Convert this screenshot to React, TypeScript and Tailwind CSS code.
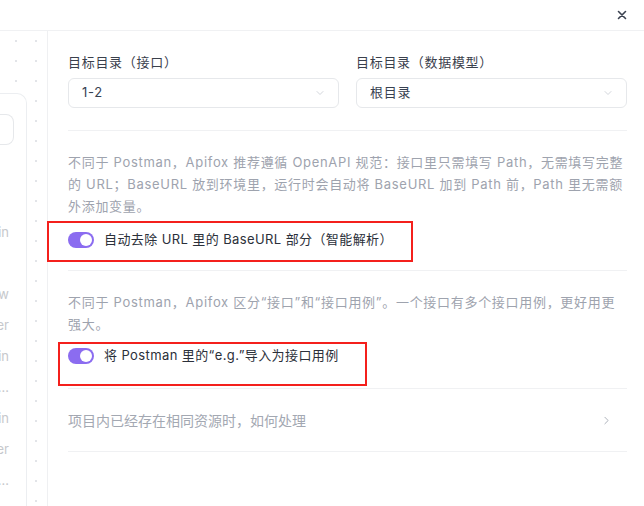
import { ChevronDown, ChevronRight } from 'lucide-react'

const leftRows = ['', '', 'Admin', '', 'Follow', 'User', 'Login', 'Pet …', 'Plugin', 'Order', 'Store …']

function Toggle() {
  return (
    <span className="flex h-[16px] w-[26px] shrink-0 items-center justify-end rounded-full bg-[#8b6cf0] px-[2px]">
      <span className="h-[12px] w-[12px] rounded-full bg-white" />
    </span>
  )
}

function Select({ value }: { value: string }) {
  return (
    <div className="flex h-[30px] items-center justify-between rounded-[6px] border border-[#e6e8eb] pl-[13px] pr-[12px]">
      <span className="text-[13px] text-[#374151]">{value}</span>
      <ChevronDown size={12} strokeWidth={1.5} className="text-[#c3c7cf]" />
    </div>
  )
}

export default function App() {
  return (
    <div className="relative h-[506px] w-[644px] overflow-hidden bg-white font-['Inter','Noto_Sans_CJK_SC',sans-serif]">
      {/* header */}
      <div className="flex h-[31px] items-center justify-end border-b border-[#f0f1f3] pr-[17px]">
        <svg width="10" height="10" viewBox="0 0 10 10" className="text-[#3b4250]">
          <path d="M1.5 1.5 L8.5 8.5 M8.5 1.5 L1.5 8.5" stroke="currentColor" strokeWidth="1.6" strokeLinecap="round" />
        </svg>
      </div>

      <div className="flex h-[475px]">
        {/* left strip */}
        <div className="w-[48px] shrink-0 border-r border-[#eff0f2] bg-[radial-gradient(circle,#e2e4e8_1px,transparent_1.2px)] bg-[length:20px_20px] bg-[position:6px_0px]">
          <div className="mt-[62px] h-full w-[27px] rounded-tr-[10px] border-r border-t border-[#eceef1] bg-white">
            <div className="mt-[20px] h-[31px] w-[14px] rounded-r-[8px] border border-l-0 border-[#e6e8eb]" />
            <div className="mt-[10px]">
              {leftRows.map((t, i) => (
                <div key={i} className="flex h-[31px] items-center justify-end overflow-hidden whitespace-nowrap pr-[17px] text-[13px] text-[#c6c8cc]">
                  {t}
                </div>
              ))}
            </div>
          </div>
        </div>

        {/* main */}
        <div className="flex-1 pl-[20px] pr-[17px] pt-[21px] tracking-[0.7px]">
          <div className="grid grid-cols-2 gap-[17px]">
            <div>
              <div className="mb-[6px] text-[13px] leading-[20px] text-[#3a404c]">目标目录（接口）</div>
              <Select value="1-2" />
            </div>
            <div>
              <div className="mb-[6px] text-[13px] leading-[20px] text-[#3a404c]">目标目录（数据模型）</div>
              <Select value="根目录" />
            </div>
          </div>

          <div className="mt-[22px] border-t border-[#f0f1f3]" />
          <p className="mt-[20px] text-[13px] leading-[22px] text-[#9ea3ae]">
            不同于 Postman，Apifox 推荐遵循 OpenAPI 规范：接口里只需填写 Path，无需填写完整的 URL；BaseURL 放到环境里，运行时会自动将 BaseURL 加到 Path 前，Path 里无需额外添加变量。
          </p>
          <div className="mt-[13px] flex h-[20px] items-center gap-[10px]">
            <Toggle />
            <span className="text-[13px] tracking-[0.4px] text-[#2b303a]">自动去除 URL 里的 BaseURL 部分（智能解析）</span>
          </div>

          <div className="mt-[20px] border-t border-[#f0f1f3]" />
          <p className="mt-[20px] text-[13px] leading-[22px] text-[#9ea3ae]">
            不同于 Postman，Apifox 区分“接口”和“接口用例”。一个接口有多个接口用例，更好用更强大。
          </p>
          <div className="mt-[11px] flex h-[20px] items-center gap-[10px]">
            <Toggle />
            <span className="text-[13px] tracking-[0.4px] text-[#2b303a]">将 Postman 里的“e.g.”导入为接口用例</span>
          </div>

          <div className="mt-[22px] border-t border-[#f0f1f3]" />
          <div className="flex h-[62px] items-center justify-between pr-[14px]">
            <span className="text-[14px] tracking-normal text-[#a3a8b2]">项目内已经存在相同资源时，如何处理</span>
            <ChevronRight size={13} strokeWidth={1.5} className="text-[#9aa0ab]" />
          </div>
          <div className="border-t border-[#f0f1f3]" />
        </div>
      </div>

      {/* annotation boxes */}
      <div className="absolute left-[47px] top-[221px] h-[41px] w-[366px] border-2 border-[#f4201c]" />
      <div className="absolute left-[58px] top-[342px] h-[44px] w-[309px] border-2 border-[#f4201c]" />
    </div>
  )
}
